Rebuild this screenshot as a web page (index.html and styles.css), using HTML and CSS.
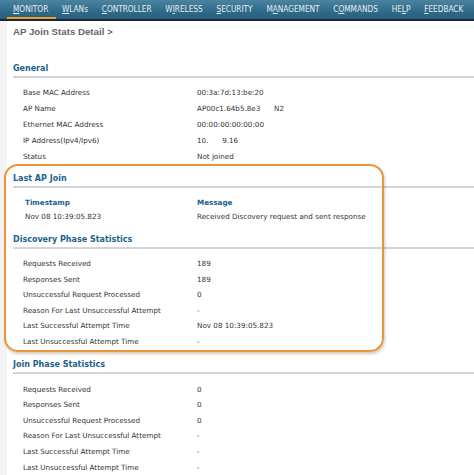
FILE: index.html
```html
<!DOCTYPE html>
<html lang="en">
<head>
    <meta charset="UTF-8">
    <meta name="viewport" content="width=device-width, initial-scale=1.0">
    <title>AP Join Stats Detail</title>
    <link rel="stylesheet" href="styles.css">
</head>
<body>
    <div class="topnav">
        <a class="active"><u>M</u>ONITOR</a>
        <a><u>W</u>LANs</a>
        <a><u>C</u>ONTROLLER</a>
        <a>W<u>I</u>RELESS</a>
        <a><u>S</u>ECURITY</a>
        <a>M<u>A</u>NAGEMENT</a>
        <a>C<u>O</u>MMANDS</a>
        <a>HE<u>L</u>P</a>
        <a><u>F</u>EEDBACK</a>
    </div>

    <div class="main">
        <div class="pageTitle">AP Join Stats Detail &gt;</div>

        <div class="section general">
            <h2>General</h2>
            <div class="rows">
                <div class="row"><span>Base MAC Address</span><span>00:3a:7d:13:be:20</span></div>
                <div class="row"><span>AP Name</span><span>AP00c1.64b5.8e3&nbsp;&nbsp;&nbsp;&nbsp;&nbsp;&nbsp;N2</span></div>
                <div class="row"><span>Ethernet MAC Address</span><span>00:00:00:00:00:00</span></div>
                <div class="row"><span>IP Address(Ipv4/Ipv6)</span><span>10.&nbsp;&nbsp;&nbsp;&nbsp;&nbsp;&nbsp;9.16</span></div>
                <div class="row"><span>Status</span><span>Not joined</span></div>
            </div>
        </div>

        <div class="section">
            <h2>Last AP Join</h2>
            <div class="joinTable">
                <div class="row head"><span>Timestamp</span><span>Message</span></div>
                <div class="row"><span>Nov 08 10:39:05.823</span><span>Received Discovery request and sent response</span></div>
            </div>
        </div>

        <div class="section discovery">
            <h2>Discovery Phase Statistics</h2>
            <div class="rows">
                <div class="row"><span>Requests Received</span><span>189</span></div>
                <div class="row"><span>Responses Sent</span><span>189</span></div>
                <div class="row"><span>Unsuccessful Request Processed</span><span>0</span></div>
                <div class="row"><span>Reason For Last Unsuccessful Attempt</span><span>-</span></div>
                <div class="row"><span>Last Successful Attempt Time</span><span>Nov 08 10:39:05.823</span></div>
                <div class="row"><span>Last Unsuccessful Attempt Time</span><span>-</span></div>
            </div>
        </div>

        <div class="section">
            <h2>Join Phase Statistics</h2>
            <div class="rows">
                <div class="row"><span>Requests Received</span><span>0</span></div>
                <div class="row"><span>Responses Sent</span><span>0</span></div>
                <div class="row"><span>Unsuccessful Request Processed</span><span>0</span></div>
                <div class="row"><span>Reason For Last Unsuccessful Attempt</span><span>-</span></div>
                <div class="row"><span>Last Successful Attempt Time</span><span>-</span></div>
                <div class="row"><span>Last Unsuccessful Attempt Time</span><span>-</span></div>
            </div>
        </div>
    </div>

    <!-- orange highlight drawn over the join / discovery block -->
    <div class="highlight"></div>
</body>
</html>
```

FILE: styles.css
```css
body {
    margin: 0;
    background-color: #f3f3f3;
    font-family: "DejaVu Sans", Verdana, sans-serif;
    color: #333;
    height: 475px;
    overflow: hidden;
    position: relative;
}
.topnav {
    height: 19px;
    background: linear-gradient(#4a84a0, #2f6a88 60%, #286080);
    border-bottom: 2px solid #1a2730;
    display: flex;
    padding-left: 7px;
}
.topnav a {
    font-family: "DejaVu Sans Condensed", "DejaVu Sans", sans-serif;
    font-size: 8.2px;
    line-height: 19px;
    color: #e6edf1;
    padding: 0 7.75px 0 6px;
    height: 19px;
    box-sizing: border-box;
}
.topnav a.active {
    border-bottom: 2px solid #f39a2c;
}
.topnav u {
    text-decoration-thickness: 1px;
    text-underline-offset: 1px;
}
.main {
    margin-left: 7px;
    background-color: #fff;
    padding-left: 6px;
    height: 454px;
}
.pageTitle {
    font-family: "Liberation Sans", Arial, sans-serif;
    font-weight: bold;
    font-size: 9.7px;
    color: #666;
    line-height: 14px;
    padding-top: 4px;
    margin-bottom: 23px;
}
.section h2 {
    margin: 0;
    font-size: 8px;
    font-weight: bold;
    color: #21618c;
    line-height: 14px;
    border-bottom: 2px solid #d2d5de;
}
.section {
    margin-bottom: 9px;
}
.general {
    margin-bottom: 7px;
}
.discovery {
    margin-bottom: 8px;
}
.rows {
    padding-top: 8px;
}
.general .rows,
.discovery .rows {
    padding-top: 7px;
}
.row {
    display: grid;
    grid-template-columns: 174px 1fr;
    font-size: 7.2px;
    line-height: 15.6px;
    padding-left: 10px;
    white-space: nowrap;
}
.general .row {
    line-height: 16px;
}
.joinTable {
    padding-top: 8px;
}
.joinTable .row {
    line-height: 14px;
    padding-left: 12px;
    grid-template-columns: 172px 1fr;
}
.joinTable .head {
    font-weight: bold;
    color: #21618c;
}
.highlight {
    position: absolute;
    left: 4px;
    top: 164px;
    width: 376px;
    height: 184px;
    border: 2px solid #e8953f;
    border-radius: 14px;
    box-shadow: 1px 2px 3px rgba(120, 80, 30, 0.3);
}
```
